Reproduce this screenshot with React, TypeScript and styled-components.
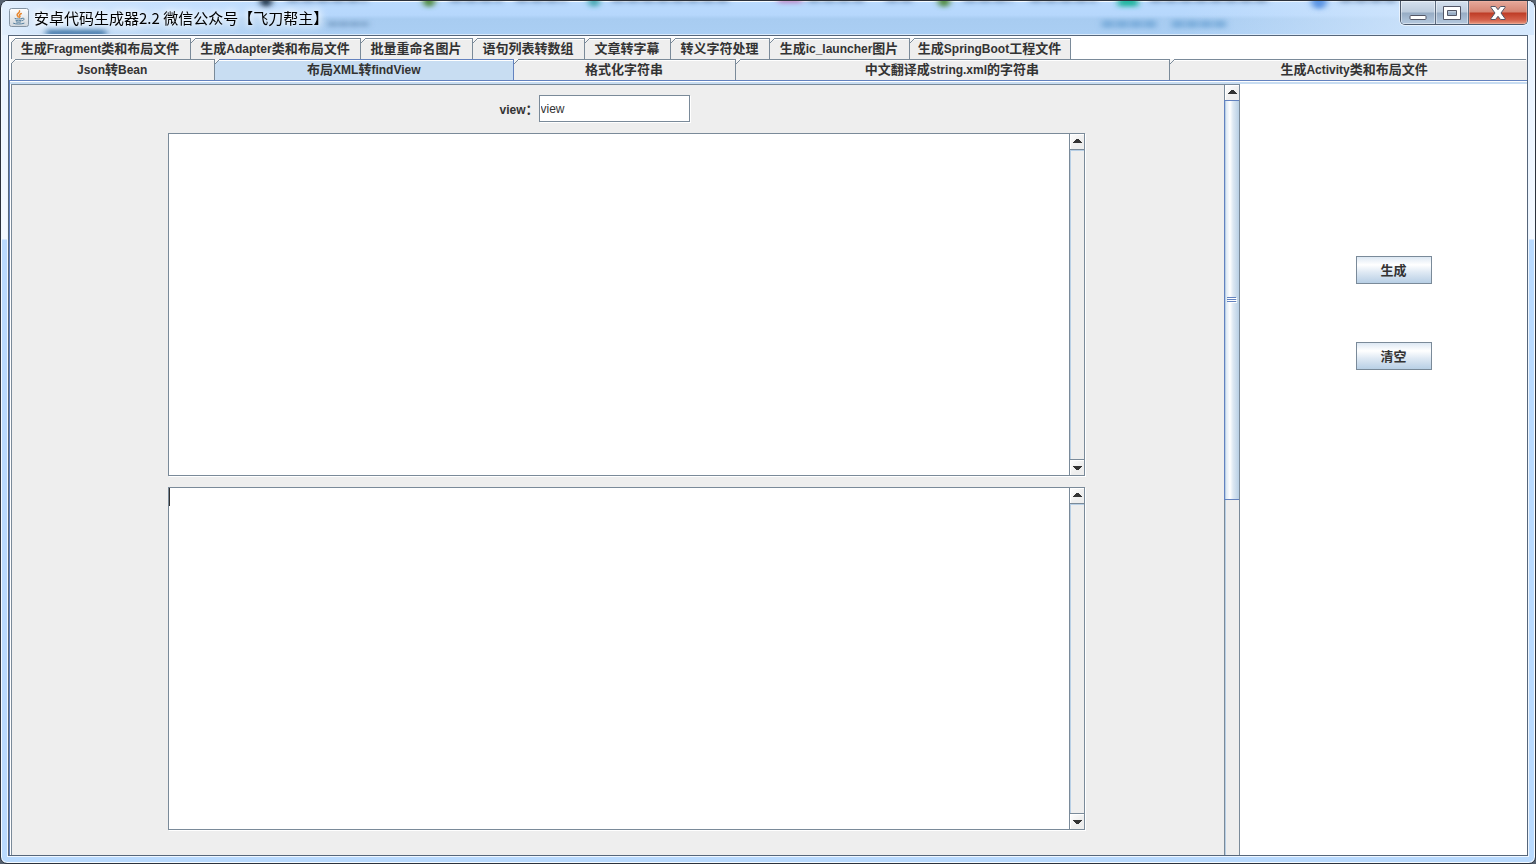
import React, { useState } from "react";
import styled, { createGlobalStyle, css } from "styled-components";

const LINE = "#7a8a99";
const ACCENT = "#6382bf";
const FACE = "#eeeeee";
const SELECTED = "#c8ddf2";

const GlobalStyle = createGlobalStyle`
  html, body { margin: 0; background: #55606e; }
  *, *::before, *::after { box-sizing: border-box; }
  button, input, textarea { font: inherit; color: inherit; }
`;

const Window = styled.div`
  height: 100vh;
  min-height: 400px;
  display: flex;
  flex-direction: column;
  overflow: hidden;
  padding: 0 7px 7px 6px;
  border: 1px solid #2c323c;
  border-radius: 8px 8px 7px 7px;
  background: linear-gradient(#e6f2ff 0, #f4f9ff 238px, #b9dafe 239px);
  box-shadow: inset 0 0 0 1px #f4faff;
  font-family: "Liberation Sans", "Noto Sans CJK SC", sans-serif;
  font-size: 12px;
  font-weight: bold;
  color: #333333;
`;

const TitleBar = styled.header`
  position: relative;
  flex: none;
  display: flex;
  align-items: flex-start;
  height: 34px;
  margin: 0 -6px 0 -5px;
  padding: 0 6px 0 7px;
  background:
    linear-gradient(90deg, #e2effd 0, #e2effd80 70px, #d5e8fd00 330px, #d5e8fd00 1180px, #d5e8fd 1500px),
    linear-gradient(#f4faff 0 1px, #b9dafe 1px, #b6d7fc 14px, #a8ccf1 18px, #aacef3 33px, #dcecfc 33px);
`;

const Backdrop = styled.svg`
  position: absolute;
  left: 0;
  top: 0;
  width: 100%;
  height: 33px;
  pointer-events: none;
`;

const AppIcon = styled.svg`
  position: relative;
  flex: none;
  width: 20px;
  height: 20px;
  margin-top: 7px;
`;

const Title = styled.h1`
  position: relative;
  flex: 1;
  margin: 6px 0 0 5px;
  font: 15px/22px "Noto Sans CJK SC", sans-serif;
  color: #000;
  white-space: nowrap;
  text-shadow: 0 0 6px #fff, 0 0 8px #fff, 0 0 12px #fff;
`;

const Controls = styled.div`
  position: relative;
  display: flex;
  height: 24px;
  border: 1px solid #4d5a6d;
  border-top: 0;
  border-radius: 0 0 5px 5px;
  box-shadow: 0 0 0 1px #ffffff90;
  overflow: hidden;
`;

const ControlButton = styled.button<{ $w: number; $close?: boolean }>`
  width: ${(p) => p.$w}px;
  padding: 0;
  border: 0;
  display: grid;
  place-items: center;
  box-shadow: inset 0 0 0 1px #ffffff70;
  background: linear-gradient(#d5e1ef 0, #bccbdc 11px, #97acc4 12px, #b5c9df 100%);
  & + & { border-left: 1px solid #5d6c80; }
  ${(p) =>
    p.$close &&
    css`
      background: linear-gradient(#e5a99b 0, #d58472 11px, #be3c26 12px, #d4604a 19px, #e79a80 100%);
      box-shadow: inset 0 0 0 1px #f3b8a880;
    `}
`;

const Client = styled.main`
  flex: 1;
  min-height: 0;
  display: flex;
  flex-direction: column;
  padding-top: 2px;
  border: 1px solid #56667a;
  box-shadow: 0 0 0 1px #eef6ff;
  background: #fff;
  margin-left: 1px;
`;

const TabRow = styled.div`
  flex: none;
  display: flex;
  height: 21px;
  padding-left: 2px;
`;

const TabText = styled.span`
  display: block;
  padding-right: 1px;
`;

const Tab = styled.button<{ $w?: number; $grow?: number; $selected?: boolean }>`
  ${(p) => (p.$grow ? `flex: ${p.$grow} 1 0;` : `flex: none; width: ${p.$w}px;`)}
  min-width: 0;
  height: 21px;
  padding: 0;
  overflow: hidden;
  border: 0;
  border-right: 1px solid ${(p) => (p.$selected ? ACCENT : LINE)};
  line-height: 18px;
  white-space: nowrap;
  background:
    linear-gradient(135deg, #f6f6f6 3px, ${LINE} 3px, ${LINE} 4px, transparent 4px) 0 0 / 6px 6px no-repeat,
    linear-gradient(${(p) => (p.$selected ? ACCENT : LINE)} 0 0) 0 0 / 100% 1px no-repeat,
    linear-gradient(#fff 0 0) 0 1px / 100% 1px no-repeat,
    linear-gradient(${LINE} 0 0) 0 5px / var(--edge, 0) 100% no-repeat,
    ${(p) => (p.$selected ? SELECTED : FACE)};
  &:first-child { --edge: 1px; }
  ${(p) =>
    p.$grow &&
    css`
      &:last-child { border-right-color: ${FACE}; }
      &:last-child ${TabText} { padding: 0 0 0 12px; }
    `}
`;

const Cjk = styled.span`
  font: bold 13px/18px "Noto Sans CJK SC", sans-serif;
`;

const TabPanel = styled.section`
  flex: 1;
  min-height: 0;
  display: flex;
  padding-left: 1px;
  border-left: 1px solid ${ACCENT};
  background: linear-gradient(${ACCENT} 0 1px, #fff 1px 2px, ${SELECTED} 2px 4px, #fff 4px);
  padding-top: 4px;
`;

const FormPane = styled.div`
  flex: 1;
  min-width: 0;
  display: flex;
  flex-direction: column;
  gap: 11px;
  padding: 10px 139px 25px 156px;
  border: 1px solid ${LINE};
  border-width: 1px 0 0 1px;
  background: ${FACE};
`;

const FieldRow = styled.div`
  flex: none;
  display: flex;
  justify-content: center;
  align-items: center;
  padding-right: 64px;
`;

const TextField = styled.input`
  width: 151px;
  height: 27px;
  padding: 0 1px;
  border: 1px solid ${LINE};
  border-radius: 0;
  outline: 0;
  background: #fff;
  font-weight: normal;
  box-shadow: 1px 1px 0 #fff;
`;

const ScrollArea = styled.div`
  flex: 1;
  min-height: 0;
  display: flex;
  border: 1px solid ${LINE};
  border-right-width: 0;
  box-shadow: 1px 1px 0 #fff;
`;

const TextArea = styled.textarea<{ $caret?: boolean }>`
  flex: 1;
  min-width: 0;
  padding: 0 1px;
  border: 0;
  outline: 0;
  resize: none;
  font-weight: normal;
  background: ${(p) => (p.$caret ? "linear-gradient(#333 0 0) 0 0 / 1px 18px no-repeat," : "")} #fff;
`;

const Bar = styled.div<{ $outer?: boolean }>`
  flex: none;
  width: 16px;
  display: flex;
  flex-direction: column;
  border: solid ${LINE};
  border-width: ${(p) => (p.$outer ? "1px 1px 0" : "0 1px")};
  background: ${FACE};
`;

const ArrowButton = styled.button`
  flex: none;
  height: 15px;
  padding: 0;
  border: 0;
  display: grid;
  place-items: center;
  background: linear-gradient(135deg, #fff, ${FACE} 60%);
  box-shadow: inset 1px 1px 0 #fff;
`;

const Track = styled.div`
  flex: 1;
  min-height: 0;
  border: solid ${LINE};
  border-width: 1px 0;
  box-shadow: inset 1px 1px 0 #b8cfe5;
  &:last-child { border-width: 0; }
`;

const Thumb = styled.div`
  height: 53%;
  margin-left: -1px;
  display: grid;
  place-items: center;
  border: 1px solid ${ACCENT};
  border-right: 0;
  background: linear-gradient(90deg, #b8cfe5 0 1px, #dde8f3 1px, #fff 5px, #dde8f3 8px, #b8cfe5 100%);
`;

const SidePane = styled.aside`
  flex: none;
  width: 287px;
  display: flex;
  flex-direction: column;
  align-items: center;
  gap: 58px;
  padding: 172px 0 0 20px;
  background: #fff;
`;

const ActionButton = styled.button`
  width: 76px;
  height: 28px;
  padding: 0;
  border: 1px solid ${LINE};
  background: linear-gradient(#dde8f3 0, #fff 30%, #dde8f3 60%, #b8cfe5 100%);
`;

/* Chinese runs are set one size larger than the Latin text around them. */
function Label({ text }: { text: string }) {
  return (
    <>
      {text.split(/([\u3000-\u9fff\uff00-\uffef]+)/).map((part, i) =>
        i % 2 ? <Cjk key={i}>{part}</Cjk> : part
      )}
    </>
  );
}

function Arrow({ down }: { down?: boolean }) {
  return (
    <svg width="9" height="5" viewBox="0 0 9 5" fill="#333" shapeRendering="crispEdges">
      <path
        d={down ? "M0 1h9v1H0zM1 2h7v1H1zM2 3h5v1H2zM3 4h3v1H3z" : "M3 0h3v1H3zM2 1h5v1H2zM1 2h7v1H1zM0 3h9v1H0z"}
      />
    </svg>
  );
}

function TextScrollBar() {
  return (
    <Bar>
      <ArrowButton aria-label="向上滚动"><Arrow /></ArrowButton>
      <Track />
      <ArrowButton aria-label="向下滚动"><Arrow down /></ArrowButton>
    </Bar>
  );
}

const TOP_TABS: [string, number][] = [
  ["生成Fragment类和布局文件", 180],
  ["生成Adapter类和布局文件", 170],
  ["批量重命名图片", 112],
  ["语句列表转数组", 112],
  ["文章转字幕", 86],
  ["转义字符处理", 99],
  ["生成ic_launcher图片", 140],
  ["生成SpringBoot工程文件", 161],
];

const BOTTOM_TABS: [string, number][] = [
  ["Json转Bean", 204],
  ["布局XML转findView", 299],
  ["格式化字符串", 221],
  ["中文翻译成string.xml的字符串", 435],
  ["生成Activity类和布局文件", 357],
];

export default function App() {
  const [view, setView] = useState("view");
  const [source, setSource] = useState("");
  const [result, setResult] = useState("");

  return (
    <>
      <GlobalStyle />
      <Window>
        <TitleBar>
          <Backdrop aria-hidden="true">
            <defs>
              <filter id="soft" filterUnits="userSpaceOnUse" x="0" y="-20" width="1536" height="80">
                <feGaussianBlur stdDeviation="3 2" />
              </filter>
            </defs>
            <g filter="url(#soft)">
              <rect x="44" y="28" width="60" height="8" fill="#4f82b0" />
              <path d="M326 23h40" stroke="#5d86ad" strokeWidth="6" strokeDasharray="9 2" opacity=".5" />
              <path d="M1100 23h56m14 0h56" stroke="#5f9ccf" strokeWidth="8" strokeDasharray="12 2" opacity=".6" />
              <path d="M285 -1h80M448 -1h52m14 0h50M610 -1h116M806 -1h56m22 0h26M962 -1h48m18 0h66M1148 -1h120M1338 -1h56" stroke="#4b6f9b" strokeWidth="6" strokeDasharray="12 3" opacity=".5" />
              <circle cx="264" cy="0" r="6" fill="#24384e" />
              <circle cx="427" cy="0" r="6" fill="#4f8a3f" />
              <circle cx="592" cy="0" r="6" fill="#4aa9b4" />
              <path d="M776 -1h24" stroke="#b985c8" strokeWidth="6" />
              <circle cx="942" cy="0" r="6" fill="#4f8a3f" />
              <path d="M1116 1h20" stroke="#22b5a0" strokeWidth="9" />
              <circle cx="1317" cy="0" r="8" fill="#5b95e4" />
            </g>
          </Backdrop>
          <AppIcon viewBox="0 0 20 20" aria-hidden="true">
            <defs>
              <linearGradient id="tile" x1="0" y1="0" x2="0" y2="1">
                <stop offset="0" stopColor="#fff" />
                <stop offset="1" stopColor="#cfd6dc" />
              </linearGradient>
            </defs>
            <rect x=".5" y=".5" width="19" height="18" rx="2" fill="url(#tile)" stroke="#8494a3" />
            <g fill="none" strokeLinecap="round">
              <path d="M10.500 2.800c1 1.800-3.200 2.700-2.300 4.400.3.700 1.100 1.100 1 1.800M12.300 5.500c-1.800.9-2.300 1.600-1.400 2.600.3.400 0 .8-.4 1.100" stroke="#e8872e" strokeWidth="1.500" />
              <path d="M6 10.500c1.500.7 5.500.7 7 0M6.800 12.300c1.400.7 4 .7 5.400 0M7.300 13.900c1.200.5 3.200.5 4.400 0M4.500 15.300c2 1 8 1 10.500 0M13.500 10.300c2.700-.5 2.200 1.800-.4 2.400" stroke="#55809f" strokeWidth="1" />
            </g>
          </AppIcon>
          <Title>安卓代码生成器2.2 微信公众号【飞刀帮主】</Title>
          <Controls>
            <ControlButton $w={34} aria-label="最小化">
              <svg width="18" height="22" viewBox="0 0 18 22">
                <rect x="1" y="13.500" width="16" height="4" rx="1" fill="#fff" stroke="#535666" />
              </svg>
            </ControlButton>
            <ControlButton $w={33} aria-label="最大化">
              <svg width="18" height="22" viewBox="0 0 18 22">
                <path d="M.5 4.500h17v13H.5zM4.500 8.500v5h9v-5z" fill="#fff" stroke="#535666" fillRule="evenodd" />
              </svg>
            </ControlButton>
            <ControlButton $w={59} $close aria-label="关闭">
              <svg width="16" height="22" viewBox="0 0 16 22">
                <path d="M1 4.500h4.500L8 7.700 10.500 4.500H15v1L11 11l4 5.500v1h-4.500L8 14.300 5.500 17.500H1v-1L5 11 1 5.500z" fill="#fff" stroke="#535666" strokeLinejoin="round" />
              </svg>
            </ControlButton>
          </Controls>
        </TitleBar>

        <Client>
          <TabRow>
            {TOP_TABS.map(([text, w]) => (
              <Tab key={text} $w={w}><TabText><Label text={text} /></TabText></Tab>
            ))}
          </TabRow>
          <TabRow>
            {BOTTOM_TABS.map(([text, grow], i) => (
              <Tab key={text} $grow={grow} $selected={i === 1}>
                <TabText><Label text={text} /></TabText>
              </Tab>
            ))}
          </TabRow>
          <TabPanel>
            <FormPane>
              <FieldRow>
                <label htmlFor="view"><Label text="view：" /></label>
                <TextField id="view" value={view} onChange={(e) => setView(e.target.value)} />
              </FieldRow>
              <ScrollArea>
                <TextArea aria-label="布局XML" value={source} onChange={(e) => setSource(e.target.value)} />
                <TextScrollBar />
              </ScrollArea>
              <ScrollArea>
                <TextArea $caret aria-label="findView" value={result} onChange={(e) => setResult(e.target.value)} />
                <TextScrollBar />
              </ScrollArea>
            </FormPane>
            <Bar $outer>
              <ArrowButton aria-label="向上滚动"><Arrow /></ArrowButton>
              <Track>
                <Thumb>
                  <svg width="10" height="6" viewBox="0 0 10 6" shapeRendering="crispEdges">
                    <path d="M1 1.500h9M1 3.500h9M1 5.500h9" stroke="#fff" />
                    <path d="M0 .5h9M0 2.500h9M0 4.500h9" stroke="#6382bf" />
                  </svg>
                </Thumb>
              </Track>
            </Bar>
            <SidePane>
              <ActionButton><Label text="生成" /></ActionButton>
              <ActionButton><Label text="清空" /></ActionButton>
            </SidePane>
          </TabPanel>
        </Client>
      </Window>
    </>
  );
}
